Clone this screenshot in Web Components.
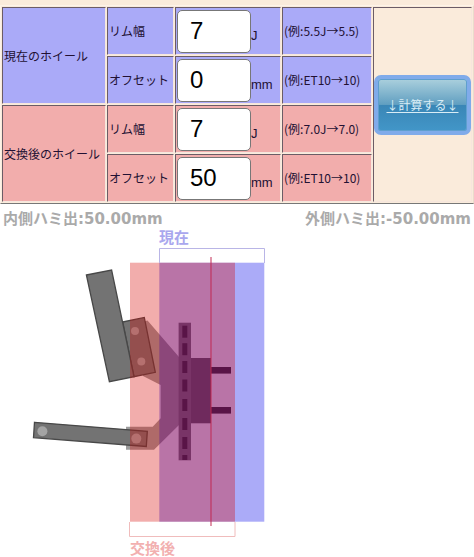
<!DOCTYPE html>
<html lang="ja">
<head>
<meta charset="utf-8">
<meta name="viewport" content="width=device-width, initial-scale=1">
<title>ホイール計算</title>
<style>
  body {
    margin: 0;
    background: #fff;
    font-family: "Noto Sans CJK JP", sans-serif;
    font-size: 12px;
  }
</style>
</head>
<body>
<wheel-form>
  <calc-button slot="action">↓計算する↓</calc-button>
</wheel-form>
<fit-result>
  <span slot="inner">内側ハミ出:50.00mm</span>
  <span slot="outer">外側ハミ出:-50.00mm</span>
</fit-result>
<wheel-diagram before="現在" after="交換後"></wheel-diagram>

<script>
class WheelForm extends HTMLElement {

  constructor() {
    super();
    this.attachShadow({ mode: "open" });

    this.shadowRoot.innerHTML = /*html*/ `
      <style>
        :host {
          display: block;
          padding-top: 5px;
          background: #faebdb;
          color: #221133;
        }

        table {
          width: 100%;
          table-layout: fixed;
          border: 1px solid;
          border-color: #fdf3e8 #eadccd #777 #fdf3e8;
          border-collapse: separate;
          border-spacing: 1px;
        }

        .name { width: 104px; }
        .item { width: 67px; }
        .value { width: 106px; }
        .hint { width: 90px; }

        td, th {
          box-sizing: border-box;
          height: 48px;
          padding: 1px;
          border: 1px solid;
          border-color: #6b5c66 #f6e6dd #f6e6dd #6b5c66;
          font-weight: normal;
          line-height: 16px;
          text-align: left;
          white-space: nowrap;
        }

        .now > * { background: #aaaaf8; }
        .next > * { background: #f2adac; }
        td.action { padding: 0; background: #faebdb; }

        td.field {
          font-family: "Liberation Sans", sans-serif;
          font-size: 13px;
        }

        input {
          box-sizing: border-box;
          width: 74px;
          height: 43px;
          margin: 0;
          padding: 0 12px;
          border: 1px solid #777;
          border-radius: 5px;
          background: #fff;
          color: #000;
          font-family: "Liberation Sans", sans-serif;
          font-size: 24px;
        }
      </style>

      <table>
        <colgroup>
          <col class="name"><col class="item"><col class="value"><col class="hint"><col>
        </colgroup>
        <tr class="now">
          <th rowspan="2">現在のホイール</th>
          <td><label for="rim1">リム幅</label></td>
          <td class="field"><input id="rim1" type="text" value="7">J</td>
          <td>(例:5.5J→5.5)</td>
          <td class="action" rowspan="4"><slot name="action"></slot></td>
        </tr>
        <tr class="now">
          <td><label for="off1">オフセット</label></td>
          <td class="field"><input id="off1" type="text" value="0">mm</td>
          <td>(例:ET10→10)</td>
        </tr>
        <tr class="next">
          <th rowspan="2">交換後のホイール</th>
          <td><label for="rim2">リム幅</label></td>
          <td class="field"><input id="rim2" type="text" value="7">J</td>
          <td>(例:7.0J→7.0)</td>
        </tr>
        <tr class="next">
          <td><label for="off2">オフセット</label></td>
          <td class="field"><input id="off2" type="text" value="50">mm</td>
          <td>(例:ET10→10)</td>
        </tr>
      </table>
    `;
  }
}

class CalcButton extends HTMLElement {

  constructor() {
    super();
    this.attachShadow({ mode: "open" });

    this.shadowRoot.innerHTML = /*html*/ `
      <style>
        :host {
          display: block;
        }

        button {
          display: block;
          box-sizing: border-box;
          width: 100%;
          height: 60px;
          padding: 0;
          border: 4px solid #80abea;
          border-radius: 7px;
          background: linear-gradient(#abd0dd, #619fc1 49%, #3a86b6 50%, #4296c8);
          box-shadow: inset 0 0 0 1px #5f9fce;
          color: #d9edf6;
          font-family: "Noto Sans CJK JP", sans-serif;
          font-size: 12px;
          text-decoration: underline;
          text-underline-offset: 2px;
        }
      </style>
      <button type="button"><slot></slot></button>
    `;
  }
}

class FitResult extends HTMLElement {

  constructor() {
    super();
    this.attachShadow({ mode: "open" });

    this.shadowRoot.innerHTML = /*html*/ `
      <style>
        :host {
          display: flex;
          justify-content: space-between;
          padding: 4px 3px 0;
          color: #aaa;
          font-family: "DejaVu Sans", "Noto Sans CJK JP", sans-serif;
          font-size: 15px;
          font-weight: bold;
          line-height: 22px;
        }
      </style>
      <slot name="inner"></slot>
      <slot name="outer"></slot>
    `;
  }
}

class WheelDiagram extends HTMLElement {

  constructor() {
    super();
    this.attachShadow({ mode: "open" });

    this.shadowRoot.innerHTML = /*html*/ `
      <style>
        :host {
          display: block;
        }

        svg {
          display: block;
          width: 100%;
          height: auto;
        }

        text {
          font-family: "DejaVu Sans", "Noto Sans CJK JP", sans-serif;
          font-size: 15px;
          font-weight: bold;
        }

        .arm { fill: #737373; stroke: #484848; stroke-width: 1.3; }
        .hole { fill: #a4a4a4; }
        .dark { fill: #2b2b2b; }
      </style>

      <svg viewBox="0 230 474 327">
        <!-- knuckle -->
        <path fill="#9b9b9b" d="M130 325L147.500 320.500L179 357V425L154 449.700H126V426.700H152.700L160.700 418.300V385L143 376Z"/>

        <!-- upper arm -->
        <path class="arm" d="M122.700 322L144.300 317.400L155.300 372.300L134 376.700Z"/>
        <path class="arm" d="M86.400 275L111.600 270L134 376.700L109.400 381.700Z"/>
        <circle class="hole" cx="135" cy="331" r="4"/>
        <circle class="hole" cx="141.300" cy="361.600" r="4"/>

        <!-- lower arm -->
        <path class="arm" d="M34.500 422.300L147.300 431.300L146.300 446.500L33.500 437.600Z"/>
        <circle class="hole" cx="42.400" cy="431.300" r="5"/>
        <circle class="hole" cx="136.300" cy="438.600" r="5"/>

        <!-- brake disc, hub and studs -->
        <rect x="178.600" y="322.700" width="12.400" height="137.600" fill="#717171"/>
        <g class="dark">
          <rect x="182.300" y="325.700" width="5" height="12"/>
          <rect x="182.300" y="343.200" width="5" height="12"/>
          <rect x="182.300" y="361" width="5" height="12"/>
          <rect x="182.300" y="379.500" width="5" height="12"/>
          <rect x="182.300" y="399" width="5" height="12"/>
          <rect x="182.300" y="418" width="5" height="12"/>
          <rect x="182.300" y="437" width="5" height="12"/>
          <rect x="182.300" y="455" width="5" height="5"/>
        </g>
        <rect x="191" y="358" width="20" height="65.300" fill="#5c5c5c"/>
        <rect class="dark" x="211" y="367" width="20" height="6.600"/>
        <rect class="dark" x="211" y="407" width="20" height="6.600"/>

        <!-- wheels -->
        <rect x="159.300" y="262.700" width="105" height="259" fill="rgb(0,0,234)" fill-opacity=".33"/>
        <rect x="130" y="262.700" width="105" height="259" fill="rgb(216,6,4)" fill-opacity=".33"/>
        <path stroke="#c0254f" stroke-opacity=".75" stroke-width="1.300" d="M211 257V526"/>

        <path fill="none" stroke="#b9b5e6" d="M159.500 263V248.500H264.500V263"/>
        <path fill="none" stroke="#f0bcbc" d="M129.500 522V536.500H235V522"/>
        <text id="before" x="159" y="243" fill="#a9a7ee"></text>
        <text id="after" x="130" y="554" fill="#f2b0b0"></text>
      </svg>
    `;
  }

  connectedCallback() {
    this.shadowRoot.getElementById("before").textContent = this.getAttribute("before");
    this.shadowRoot.getElementById("after").textContent = this.getAttribute("after");
  }
}

customElements.define("wheel-form", WheelForm);
customElements.define("calc-button", CalcButton);
customElements.define("fit-result", FitResult);
customElements.define("wheel-diagram", WheelDiagram);
</script>
</body>
</html>
